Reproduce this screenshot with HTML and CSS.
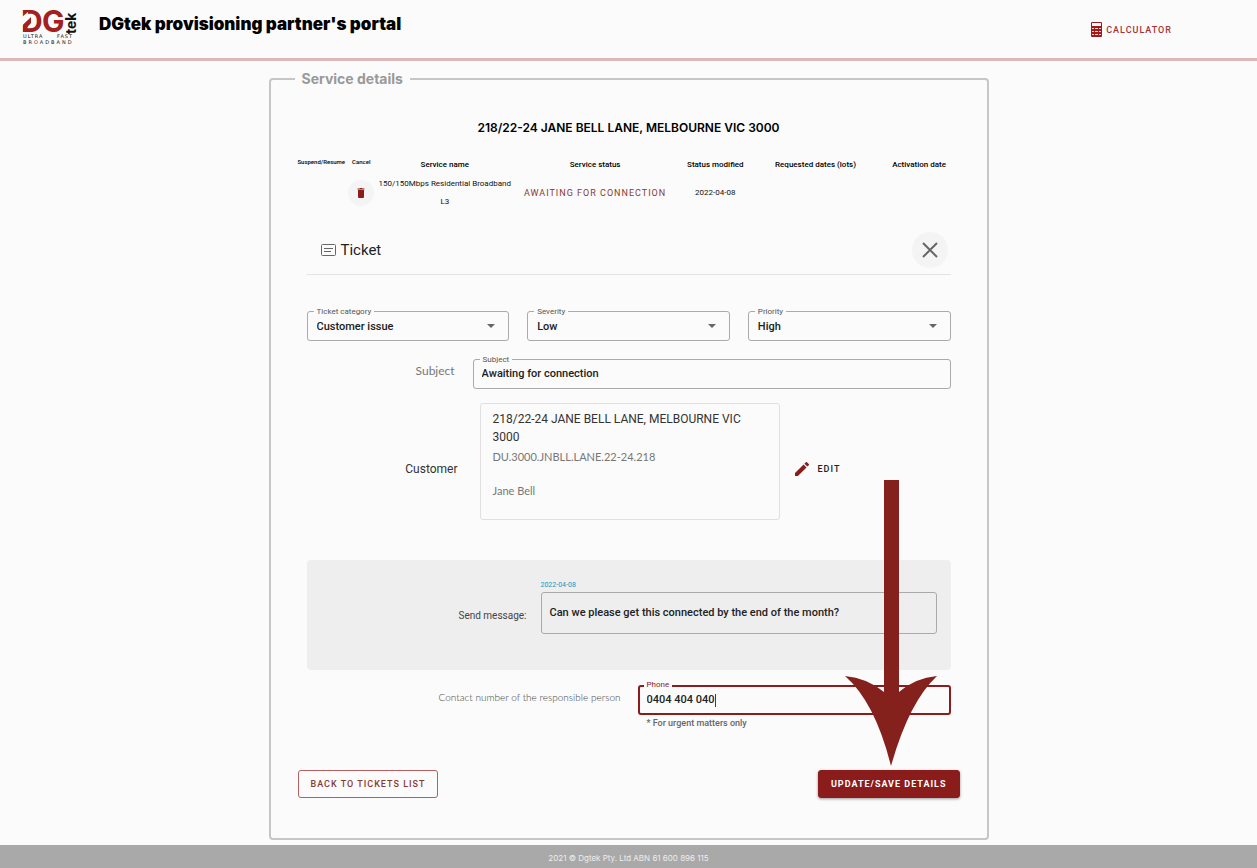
FILE: index.html
```html
<!DOCTYPE html>
<html lang="en">
<head>
    <meta charset="UTF-8">
    <meta name="viewport" content="width=device-width, initial-scale=1.0">
    <title>DGtek provisioning partner's portal</title>
    <link rel="stylesheet" href="styles.css">
</head>
<body>

    <!-- Header -->
    <header class="header">
        <svg class="logo" viewBox="0 0 54 36" role="img" aria-label="DGtek Ultra Fast Broadband">
            <text class="logo-dg" x="-2" y="23">D</text>
            <text class="logo-dg" x="19" y="23">G</text>
            <path d="M-1 8 L5 3 V11 L-1 17z" fill="#fbfbfb"/>
            <path d="M0 16 L8 8 V14 L0 23z" fill="#a32020"/>
            <text class="logo-tek" transform="translate(53 25) rotate(-90)">tek</text>
            <text class="logo-line" x="0" y="29">ULTRA</text>
            <text class="logo-line" x="34" y="29">FAST</text>
            <text class="logo-line logo-wide" x="0" y="35">BR<tspan fill="#a32020">O</tspan>ADBAND</text>
        </svg>
        <h1>DGtek provisioning partner's portal</h1>
        <a class="calculator" href="#">
            <svg width="12" height="16" viewBox="0 0 12 16">
                <rect x="1" y="0" width="11" height="15" rx="1" fill="#a01a1a"/>
                <rect x="2" y="1" width="9" height="3" fill="#fbfbfb"/>
                <path d="M2 6.5h2M5 6.5h3M9 6.5h2M2 9.5h2M5 9.5h3M9 9.5h2M2 12.5h2M5 12.5h3M9 12.5h2" stroke="#f3d6d6"/>
            </svg>
            Calculator
        </a>
    </header>

    <main>
        <fieldset class="service">
            <legend>Service details</legend>
            <div class="service-body">
                <h2>218/22-24 JANE BELL LANE, MELBOURNE VIC 3000</h2>

                <table class="services">
                    <colgroup>
                        <col class="col-suspend"><col class="col-cancel"><col class="col-name"><col class="col-status"><col class="col-modified"><col class="col-requested"><col class="col-activation">
                    </colgroup>
                    <thead>
                        <tr>
                            <th class="tiny">Suspend/Resume</th>
                            <th class="tiny">Cancel</th>
                            <th>Service name</th>
                            <th>Service status</th>
                            <th>Status modified</th>
                            <th>Requested dates (lots)</th>
                            <th>Activation date</th>
                        </tr>
                    </thead>
                    <tbody>
                        <tr>
                            <td></td>
                            <td>
                                <button class="round-btn small" type="button" aria-label="Cancel service">
                                    <svg width="8" height="10" viewBox="0 0 8 10"><path d="M0.5 0.5h2l.5-.5h2l.5.5h2v1h-7zM1 2h6v7a1 1 0 0 1-1 1H2a1 1 0 0 1-1-1z" fill="#8a1c1c"/></svg>
                                </button>
                            </td>
                            <td>150/150Mbps Residential Broadband L3</td>
                            <td class="status">Awaiting for connection</td>
                            <td>2022-04-08</td>
                            <td></td>
                            <td></td>
                        </tr>
                    </tbody>
                </table>

                <!-- Ticket form -->
                <form class="ticket">
                    <div class="ticket-head">
                        <svg width="15" height="12" viewBox="0 0 15 12" fill="none" stroke="#666">
                            <rect x="0.5" y="0.5" width="14" height="11" rx="1"/>
                            <path d="M3 4.5h9M3 7.5h7"/>
                        </svg>
                        <h3>Ticket</h3>
                        <button class="round-btn" type="button" aria-label="Close">
                            <svg width="16" height="16" viewBox="0 0 16 16" stroke="#666" stroke-width="2"><path d="M1 1l14 14M15 1L1 15"/></svg>
                        </button>
                    </div>

                    <div class="selects">
                        <div class="field">
                            <label for="category">Ticket category</label>
                            <select id="category"><option>Customer issue</option></select>
                        </div>
                        <div class="field">
                            <label for="severity">Severity</label>
                            <select id="severity"><option>Low</option></select>
                        </div>
                        <div class="field">
                            <label for="priority">Priority</label>
                            <select id="priority"><option>High</option></select>
                        </div>
                    </div>

                    <div class="row subject-row">
                        <span class="row-label">Subject</span>
                        <div class="field">
                            <label for="subject">Subject</label>
                            <input id="subject" type="text" value="Awaiting for connection">
                        </div>
                    </div>

                    <div class="row customer-row">
                        <span class="row-label">Customer</span>
                        <div class="card">
                            <p class="address">218/22-24 JANE BELL LANE, MELBOURNE VIC 3000</p>
                            <p>DU.3000.JNBLL.LANE.22-24.218</p>
                            <p class="person">Jane Bell</p>
                        </div>
                        <button class="edit" type="button">
                            <svg width="14" height="14" viewBox="3 3 18 18" fill="#8a1c1c"><path d="M3 17.25V21h3.75L17.81 9.94l-3.75-3.75L3 17.25zM20.71 7.04a1 1 0 0 0 0-1.41l-2.34-2.34a1 1 0 0 0-1.41 0l-1.83 1.83 3.75 3.75 1.83-1.83z"/></svg>
                            Edit
                        </button>
                    </div>

                    <div class="message">
                        <label for="message">Send message:</label>
                        <div class="message-box">
                            <time>2022-04-08</time>
                            <textarea id="message" rows="1">Can we please get this connected by the end of the month?</textarea>
                        </div>
                    </div>

                    <div class="row phone-row">
                        <span class="row-label">Contact number of the responsible person</span>
                        <div class="phone">
                            <div class="field active">
                                <label for="phone">Phone</label>
                                <input id="phone" type="tel" value="0404 404 040">
                                <span class="caret"></span>
                            </div>
                            <small>* For urgent matters only</small>
                        </div>
                    </div>
                </form>

                <div class="actions">
                    <button class="btn outlined" type="button">Back to tickets list</button>
                    <button class="btn filled" type="button">Update/Save details</button>
                </div>

                <svg class="arrow" width="92" height="286" viewBox="0 0 92 286">
                    <path d="M39 0H54V212Q70 198 92 196Q64 222 46 286Q30 222 0 196Q22 198 39 212z" fill="#85211c"/>
                </svg>
            </div>
        </fieldset>
    </main>

    <footer>2021 © Dgtek Pty. Ltd ABN 61 600 896 115</footer>

</body>
</html>
```
FILE: styles.css
```css
* {
    box-sizing: border-box;
}

body {
    margin: 0;
    min-height: 100vh;
    display: flex;
    flex-direction: column;
    background: #fbfbfb;
    color: #222;
    font-family: Roboto, sans-serif;
}

h1, h2, h3, p {
    margin: 0;
}

button, input, select, textarea {
    font-family: inherit;
    color: inherit;
}

button {
    cursor: pointer;
}

/* Header */
.header {
    display: flex;
    height: 61px;
    padding: 9px 85px 0 23px;
    border-bottom: 3px solid #dcb9b9;
}

.logo {
    width: 54px;
    height: 36px;
    margin-right: 22px;
    overflow: visible;
}

.logo-dg {
    font: 700 30px Inter, sans-serif;
    fill: #a32020;
}

.logo-tek {
    font: 700 14px Inter, sans-serif;
    fill: #111;
}

.logo-line {
    font: 5px "DejaVu Sans", sans-serif;
    fill: #111;
    letter-spacing: 1px;
}

.logo-wide {
    letter-spacing: 2px;
}

.header h1 {
    color: #000;
    font: 900 17px/30px Inter, sans-serif;
}

.calculator {
    display: flex;
    align-items: center;
    gap: 4px;
    height: 42px;
    margin-left: auto;
    color: #a83232;
    font-size: 9px;
    font-weight: 500;
    letter-spacing: 1px;
    text-transform: uppercase;
    text-decoration: none;
}

/* Service panel */
main {
    flex: 1;
    padding: 9px 16px 5px;
}

.service {
    max-width: 720px;
    min-width: 0;
    margin: 0 auto;
    padding: 0;
    border: 2px solid #c6c6c6;
    border-radius: 4px;
}

.service legend {
    margin-left: 24px;
    padding: 0 7px;
    color: #999;
    font: 700 14px/18px Inter, sans-serif;
}

.service-body {
    position: relative;
    padding: 30px 24px 40px;
}

.service h2 {
    color: #000;
    font: 600 12px/20px Inter, sans-serif;
    text-align: center;
}

.services {
    width: 100%;
    margin-top: 17px;
    border-collapse: collapse;
    table-layout: fixed;
    color: #111;
    font-size: 8px;
    line-height: 18px;
    text-align: center;
}

.services th, .services td {
    padding: 0;
}

.services th {
    height: 20px;
    font-weight: 500;
    color: #000;
    white-space: nowrap;
}

.services td {
    height: 36px;
}

.services .tiny {
    font-size: 6px;
    line-height: 14px;
    vertical-align: top;
}

.services .status {
    color: #8a3a30;
    font-size: 9px;
    letter-spacing: 1px;
    text-transform: uppercase;
    white-space: nowrap;
}

.col-suspend { width: 8%; }
.col-cancel { width: 4%; }
.col-name { width: 21%; }
.col-status { width: 24%; }
.col-modified { width: 12%; }
.col-requested { width: 18%; }
.col-activation { width: 13%; }

.round-btn {
    display: inline-flex;
    align-items: center;
    justify-content: center;
    width: 36px;
    height: 36px;
    padding: 0;
    border: 0;
    border-radius: 50%;
    background: #f4f4f4;
}

.round-btn.small {
    width: 26px;
    height: 26px;
    vertical-align: middle;
}

/* Ticket form */
.ticket {
    margin: 15px 12px 0;
}

.ticket-head {
    display: flex;
    align-items: center;
    height: 49px;
    padding: 0 3px 0 14px;
    border-bottom: 1px solid #e4e4e4;
}

.ticket-head h3 {
    margin-left: 5px;
    font-size: 15px;
    font-weight: 400;
}

.ticket-head .round-btn {
    margin-left: auto;
}

.selects {
    display: grid;
    grid-template-columns: repeat(3, 1fr);
    gap: 18px;
    margin-top: 36px;
}

.field {
    position: relative;
    display: flex;
    align-items: center;
    height: 30px;
    border: 1px solid #aaa;
    border-radius: 3px;
}

.field label {
    position: absolute;
    top: -5px;
    left: 6px;
    padding: 0 3px;
    background: #fbfbfb;
    color: #555;
    font-size: 8px;
    line-height: 10px;
}

.field input, .field select {
    width: 100%;
    height: 100%;
    padding: 0 9px;
    border: 0;
    outline: 0;
    background: none;
    font-size: 11px;
    font-weight: 500;
}

.field input {
    padding: 0 8px 2px;
}

.field select {
    appearance: none;
}

.field:has(select)::after {
    content: "";
    position: absolute;
    right: 13px;
    border: 4px solid transparent;
    border-top-color: #666;
    border-bottom: 0;
}

.row {
    display: flex;
}

.row-label {
    color: #777;
    font-family: Lato, sans-serif;
}

.subject-row {
    align-items: center;
    gap: 18px;
    margin-top: 18px;
}

.subject-row .row-label {
    width: 23%;
    padding-bottom: 8px;
    font-size: 12px;
    text-align: right;
}

.subject-row .field {
    flex: 1;
}

.customer-row {
    align-items: center;
    margin-top: 14px;
}

.customer-row .row-label {
    width: 151px;
    margin-right: 22px;
    padding-top: 14px;
    color: #333;
    font: 12px/18px Roboto, sans-serif;
    text-align: right;
}

.card {
    width: 300px;
    min-height: 117px;
    padding: 6px 12px;
    border: 1px solid #e0e0e0;
    border-radius: 3px;
    color: #777;
    font: 11px/22px Lato, sans-serif;
}

.card .address {
    color: #333;
    font: 12px/18px Roboto, sans-serif;
}

.card .person {
    margin-top: 12px;
}

.edit {
    display: flex;
    align-items: center;
    gap: 9px;
    margin-left: 15px;
    padding: 14px 0 0;
    border: 0;
    background: none;
    font-size: 9px;
    font-weight: 500;
    letter-spacing: 1px;
    text-transform: uppercase;
}

.message {
    display: flex;
    align-items: center;
    justify-content: flex-end;
    gap: 14px;
    min-height: 110px;
    margin-top: 40px;
    padding: 0 14px;
    border-radius: 4px;
    background: #eee;
}

.message label {
    color: #444;
    font-size: 10px;
}

.message-box {
    width: 396px;
    padding-bottom: 18px;
}

.message time {
    display: block;
    color: #0a9bc4;
    font-size: 7px;
    line-height: 14px;
}

.message textarea {
    display: block;
    width: 100%;
    height: 42px;
    padding: 12px 8px;
    border: 1px solid #aaa;
    border-radius: 3px;
    background: none;
    font-size: 11px;
    font-weight: 500;
    line-height: 15px;
    resize: none;
}

.phone-row {
    justify-content: flex-end;
    gap: 17px;
    margin-top: 15px;
}

.phone-row .row-label {
    color: #444;
    font-size: 10px;
    font-weight: 300;
    line-height: 24px;
}

.phone {
    width: 313px;
}

.field.active {
    border: 2px solid #8a1c1c;
}

.field.active label {
    top: -7px;
    left: 4px;
    color: #8a1c1c;
}

.field.active input {
    width: auto;
    padding: 0 0 2px 7px;
    field-sizing: content;
}

.caret {
    width: 1px;
    height: 13px;
    background: #8a1c1c;
}

.phone small {
    display: block;
    padding-left: 9px;
    color: #666;
    font-size: 9px;
    font-weight: 500;
    line-height: 16px;
}

.actions {
    display: flex;
    justify-content: space-between;
    margin-top: 39px;
    padding: 0 3px;
}

.btn {
    height: 28px;
    padding: 0 12px;
    border: 1px solid #8a1c1c;
    border-radius: 3px;
    font-size: 9px;
    font-weight: 500;
    letter-spacing: 1px;
    text-transform: uppercase;
}

.btn.outlined {
    border-color: #b56060;
    background: none;
    color: #8a3a30;
}

.btn.filled {
    background: #8a1c1c;
    color: #fff;
    font-weight: 700;
    box-shadow: 0 1px 3px rgba(0, 0, 0, 0.4);
}

/* Pointer over the save button */
.arrow {
    position: absolute;
    top: 392px;
    right: 50px;
    pointer-events: none;
}

footer {
    padding: 6px 4px 2px;
    background: #a9a9a9;
    color: #eee;
    font: 8px/15px Inter, sans-serif;
    text-align: center;
}
```
